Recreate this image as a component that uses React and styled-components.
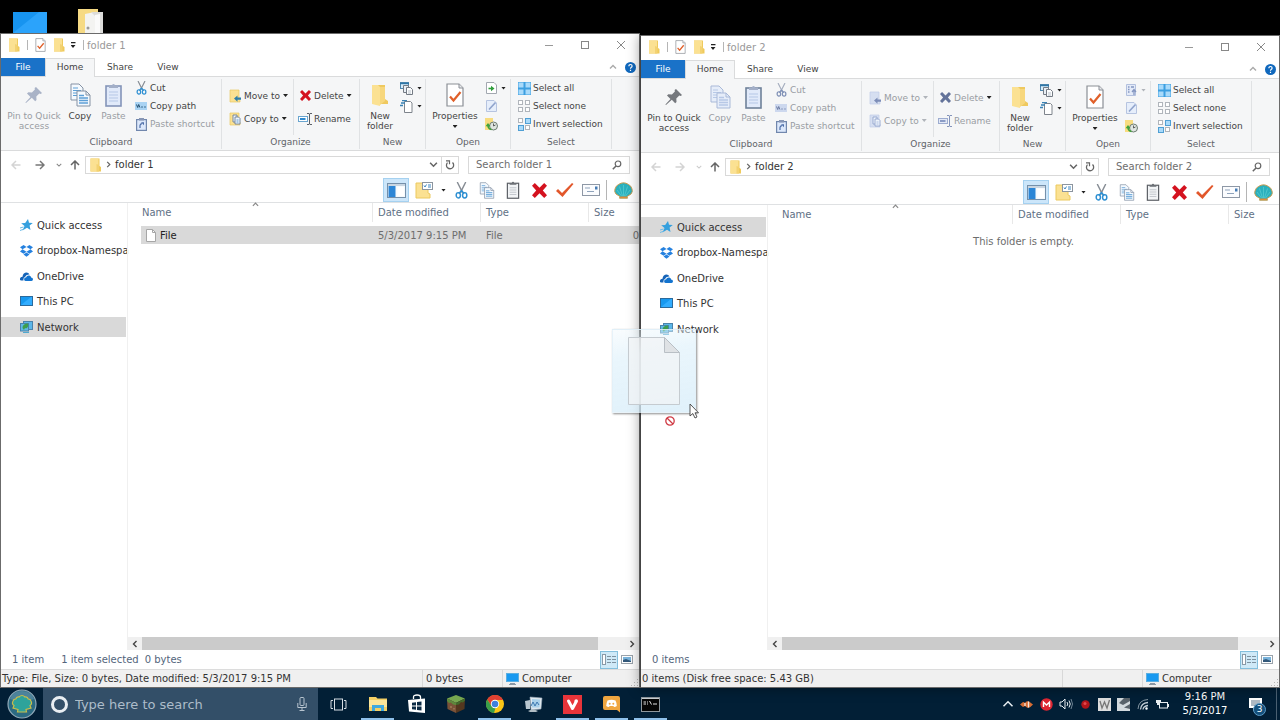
import styled, { createGlobalStyle, css } from "styled-components";

const GlobalStyle = createGlobalStyle`
  * {
    box-sizing: border-box;
  }
  body {
    margin: 0;
    background: #000;
    font-family: "DejaVu Sans", Verdana, sans-serif;
    font-size: 10px;
    color: #333;
  }
  button, input {
    font: inherit;
    color: inherit;
    border: 0;
    padding: 0;
    margin: 0;
    background: none;
    outline: none;
  }
  svg {
    display: block;
    flex: none;
  }
`;

/* ---------- icons ---------- */

function FolderIcon({ w = 12, h = 14 }) {
  return (
    <svg width={w} height={h} viewBox="0 0 12 14">
      <path d="M1 .5h9v7.500l1.500 1v4.500H1z" fill="#efca5c" />
      <path d="M1 .5h8v13H1z" fill="#fbe192" />
      <path d="M7 6l2.500 1v6.500H7z" fill="#f3d272" />
    </svg>
  );
}

function BigFolderIcon() {
  return (
    <svg width="18" height="24" viewBox="0 0 18 24">
      <path d="M1 2h13v14l3 2v3H1z" fill="#efc95f" />
      <path d="M1 2h6l2 2v19l-8-2z" fill="#fbe192" />
      <path d="M9 4h5v14l-5 4z" fill="#f7d77d" />
    </svg>
  );
}

function CheckPageIcon({ w = 11, h = 14 }) {
  return (
    <svg width={w} height={h} viewBox="0 0 18 24">
      <path d="M1 1h12l4 4v18H1z" fill="#fff" stroke="#8b8f96" strokeWidth="1.200" />
      <path d="M13 1v4h4" fill="#e7e9ec" stroke="#8b8f96" />
      <path d="M4 13.500l3.500 4 7-8.500" fill="none" stroke="#e0602a" strokeWidth="2.200" />
    </svg>
  );
}

function PinIcon({ off }) {
  return (
    <svg width="18" height="18" viewBox="0 0 18 18">
      <path
        d="M11 1l6 6-1.200 1-1.500-.4-3 3 .2 3.400-1.300 1.200-3.400-3.400L1 17l-.6-.6L5.500 11 2 7.500l1.400-1.200 3.500.2 3-3L9.600 2z"
        fill={off ? "#a9b3c7" : "#75787d"}
      />
    </svg>
  );
}

function CopyIcon({ w = 21, h = 24, off }) {
  const stroke = off ? "#a9b9d8" : "#8592a4";
  const line = off ? "#b7c8e6" : "#5c9fd6";
  const fill = off ? "#e6edf9" : "#f4f9fe";
  return (
    <svg width={w} height={h} viewBox="0 0 21 24">
      <path d="M1 1h8l4 4v12H1z" fill={fill} stroke={stroke} />
      <path d="M3 5h5M3 7.500h8M3 10h8M3 12.500h8" stroke={line} />
      <path d="M7 8h9l4 4v11H7z" fill={fill} stroke={stroke} />
      <path d="M16 8v4h4" fill="none" stroke={stroke} />
      <path d="M9 12.500h5M9 15h9M9 17.500h9M9 20h9" stroke={line} strokeWidth="1.300" />
    </svg>
  );
}

function PasteIcon({ w = 17, h = 24, dark, pale }) {
  const frame = dark ? "#5c6066" : pale ? "#8494b8" : "#6f8199";
  const line = dark ? "#b4b9c0" : "#b5c7e6";
  return (
    <svg width={w} height={h} viewBox="0 0 17 24">
      <rect x="1" y="3" width="15" height="20" fill={dark ? "#f2f4f6" : "#e1eafa"} stroke={frame} strokeWidth="1.600" />
      <path d="M4 5V2.500h3a1.500 1.500 0 013 0h3V5z" fill={dark ? "#6c7076" : "#a3afc8"} />
      <path d="M4 9h9M4 12h9M4 15h9M4 18h9" stroke={line} />
    </svg>
  );
}

function CutIcon({ w = 11, h = 14, off }) {
  const handle = off ? "#7f90b6" : "#2d8fd2";
  return (
    <svg width={w} height={h} viewBox="0 0 12 16">
      <path d="M2 0l5 10M10 0L5 10" stroke={off ? "#a5aebf" : "#858b93"} strokeWidth="1.300" />
      <ellipse cx="3" cy="12.500" rx="2" ry="2.500" fill="none" stroke={handle} strokeWidth="1.400" />
      <ellipse cx="9" cy="12.500" rx="2" ry="2.500" fill="none" stroke={handle} strokeWidth="1.400" />
      <path d="M6 8l-2.500 3M6 8l2.500 3" stroke={handle} strokeWidth="1.400" />
    </svg>
  );
}

function CopyPathIcon({ off }) {
  return (
    <svg width="12" height="8" viewBox="0 0 12 8">
      <rect width="12" height="8" fill={off ? "#cdd8ee" : "#a9d3f3"} />
      <path d="M1.500 2.500l1.200 3 1-3 1.200 3" fill="none" stroke={off ? "#6b7ba3" : "#24506f"} />
      <path d="M6 5h2M9 5h2" stroke={off ? "#8d9cc0" : "#3d6f92"} />
    </svg>
  );
}

function PasteShortcutIcon() {
  return (
    <svg width="11" height="13" viewBox="0 0 11 13">
      <rect x=".6" y="1.600" width="9.800" height="10.800" fill="#dce8fb" stroke="#7187ad" strokeWidth="1.200" />
      <rect x="3" y="0" width="5" height="2.500" fill="#8796b5" />
      <path d="M4 10V7.500q0-1.500 2-1.800" fill="none" stroke="#4d6ea8" strokeWidth="1.200" />
      <path d="M5 4.200h3v3z" fill="#4d6ea8" />
    </svg>
  );
}

function MoveToIcon({ off }) {
  return (
    <svg width="12" height="14" viewBox="0 0 12 14">
      <path d="M1 1h9v8l1 1v3H1z" fill={off ? "#d6dff1" : "#fbe192"} stroke={off ? "#c0cce6" : "#eac862"} strokeWidth=".7" />
      <path d="M5 9.500L8.500 6.500v2H12v2.200H8.500v2z" fill={off ? "#7c8db8" : "#2f7fa8"} />
    </svg>
  );
}

function CopyToIcon({ off }) {
  const s = off ? "#93a5cd" : "#6b7f97";
  return (
    <svg width="12" height="14" viewBox="0 0 12 14">
      <path d="M1 1h9v8l1 1v3H1z" fill={off ? "#d6dff1" : "#fbe192"} stroke={off ? "#c0cce6" : "#eac862"} strokeWidth=".7" />
      <path d="M4 3h4v7H4z" fill="#eef4fb" stroke={s} strokeWidth=".9" />
      <path d="M6 5h3.500L11 6.500V12H6z" fill="#eef4fb" stroke={s} strokeWidth=".9" />
      <path d="M7.500 8h2M7.500 10h2" stroke={off ? "#a4b8de" : "#4d94cf"} strokeWidth=".9" />
    </svg>
  );
}

function DeleteIcon({ size = 11, off }) {
  return (
    <svg width={size} height={size} viewBox="0 0 16 16">
      <path
        d="M3 0l5 5 5-5 3 3-4.500 5 4.500 5-3 3-5-5-5 5-3-3 4.500-5L0 3z"
        fill={off ? "#63739a" : "#d4121f"}
      />
    </svg>
  );
}

function RenameIcon({ off }) {
  return (
    <svg width="14" height="12" viewBox="0 0 14 12">
      <rect x=".5" y="3.500" width="9" height="5" fill={off ? "#e3e9f6" : "#fff"} stroke={off ? "#9dacd0" : "#6aa5cf"} />
      <rect x="2" y="5" width="5.500" height="2" fill={off ? "#8b9cc6" : "#2f8ad0"} />
      <path d="M9 .5h2l.5.5.5-.5h2M9 11.500h2l.5-.5.5.5h2M11.500 1v10" fill="none" stroke={off ? "#8494bb" : "#5a6068"} />
    </svg>
  );
}

function NewItemIcon() {
  return (
    <svg width="14" height="13" viewBox="0 0 14 13">
      <rect x=".5" y=".5" width="8" height="6" fill="#d5ecfb" stroke="#4f87ae" />
      <path d="M0 1.500h9" stroke="#2e75a5" strokeWidth="1.400" />
      <path d="M3.500 3.500h5v7h-5z" fill="#e9eff5" stroke="#747b84" />
      <path d="M6.500 5.500h4l2 2v5h-6z" fill="#fbfcfd" stroke="#747b84" />
      <path d="M8 9h3M8 11h3" stroke="#a9b4be" strokeWidth=".8" />
    </svg>
  );
}

function EasyAccessIcon() {
  return (
    <svg width="14" height="13" viewBox="0 0 14 13">
      <path d="M4.500 1.500h6l1.500 1.500v9.500H4.500z" fill="#fff" stroke="#7e848c" />
      <path d="M2 .7h5M1 3h4M0 5.500h3" stroke="#3a83b5" strokeWidth="1.300" />
    </svg>
  );
}

function OpenIcon() {
  return (
    <svg width="11" height="12" viewBox="0 0 11 12">
      <path d="M.5.500h7.500l2.500 2.500v8.500H.5z" fill="#fff" stroke="#a2a8b0" />
      <path d="M2.500 6.500h3" stroke="#2f9e3b" strokeWidth="1.600" />
      <path d="M5 3.800l3.500 2.700L5 9.200z" fill="#2f9e3b" />
    </svg>
  );
}

function OpenListIcon() {
  return (
    <svg width="11" height="12" viewBox="0 0 11 12">
      <path d="M.5.500h9v11h-9z" fill="#e3eaf8" stroke="#b2c0de" />
      <path d="M2 3h1.500M2 5.500h1.500M2 8h1.500M5 3h3" stroke="#8496c0" strokeWidth="1.300" />
      <path d="M8 11V6M6 8l2-2.500L10 8" fill="none" stroke="#8496c0" strokeWidth="1.300" />
    </svg>
  );
}

function EditIcon() {
  return (
    <svg width="11" height="12" viewBox="0 0 11 12">
      <path d="M.5.500h7.500l2.500 2.500v8.500H.5z" fill="#e6eefb" stroke="#b6c4e0" />
      <path d="M3 9.500L9.500 2.500" stroke="#8fa3cc" strokeWidth="1.600" />
    </svg>
  );
}

function HistoryIcon() {
  return (
    <svg width="13" height="13" viewBox="0 0 13 13">
      <path d="M0 0h8v8l-1 4H0z" fill="#f8dc80" />
      <circle cx="8.500" cy="8" r="4" fill="#dfe5e0" stroke="#6d7d72" />
      <path d="M8.500 5.500V8l2-1" fill="none" stroke="#555" strokeWidth=".9" />
      <path d="M3 8q.3 3 3.500 3.500" fill="none" stroke="#3fa33b" strokeWidth="1.600" />
      <path d="M.6 8.200L3 5l2.500 3.200z" fill="#3fa33b" />
    </svg>
  );
}

function SelectIcon({ kind }) {
  const cells = [[0, 0], [7, 0], [0, 7], [7, 7]];
  if (kind === "all") {
    return (
      <svg width="13" height="13" viewBox="0 0 13 13">
        <rect width="13" height="13" fill="#3c9fe0" />
        {cells.map(([x, y]) => (
          <rect key={`${x}${y}`} x={x + 0.5} y={y + 0.5} width="5" height="5" fill="#a9dafa" />
        ))}
      </svg>
    );
  }
  return (
    <svg width="13" height="13" viewBox="0 0 13 13">
      {cells.map(([x, y]) => {
        const on = kind === "invert" && x + y === 7;
        return (
          <rect
            key={`${x}${y}`}
            x={x + 0.5}
            y={y + 0.5}
            width={on ? 5 : 4}
            height={on ? 5 : 4}
            fill={on ? "#a9dafa" : "#fff"}
            stroke={on ? "#4f9fd4" : "#b0b5bb"}
          />
        );
      })}
    </svg>
  );
}

function ArrowIcon({ dir, color }) {
  const turn = { left: 0, up: 90, right: 180 }[dir];
  return (
    <svg width="10" height="10" viewBox="0 0 10 10">
      <path d="M9.500 5H1M5 1L1 5l4 4" fill="none" stroke={color} strokeWidth="1.500" transform={`rotate(${turn} 5 5)`} />
    </svg>
  );
}

function ChevronIcon({ dir = "down", color = "#666", w = 8, weight = 1.4 }) {
  const turn = { down: 0, left: 90, up: 180, right: 270 }[dir];
  return (
    <svg width={w} height={w} viewBox="0 0 8 8">
      <path d="M1 2.500l3 3 3-3" fill="none" stroke={color} strokeWidth={weight} transform={`rotate(${turn} 4 4)`} />
    </svg>
  );
}

function RefreshIcon() {
  return (
    <svg width="10" height="10" viewBox="0 0 10 10">
      <path d="M7.500 2.500A3.600 3.600 0 112.500 2.600" fill="none" stroke="#666" strokeWidth="1.300" />
      <path d="M1 .8h3.500v3.500" fill="none" stroke="#666" strokeWidth="1.200" />
    </svg>
  );
}

function SearchIcon() {
  return (
    <svg width="10" height="10" viewBox="0 0 10 10">
      <circle cx="6" cy="3.800" r="2.800" fill="none" stroke="#666" strokeWidth="1.200" />
      <path d="M4 6L.8 9.200" stroke="#666" strokeWidth="1.500" />
    </svg>
  );
}

function HelpIcon() {
  return (
    <svg width="11" height="11" viewBox="0 0 11 11">
      <circle cx="5.500" cy="5.500" r="5.500" fill="#1068bd" />
      <path d="M3.900 4.200q0-1.700 1.600-1.700t1.600 1.500q0 1-1 1.500-.6.300-.6 1.200M5.500 7.700v1.200" fill="none" stroke="#fff" strokeWidth="1.200" />
    </svg>
  );
}

function PaneIcon() {
  return (
    <svg width="19" height="15" viewBox="0 0 19 15">
      <rect x=".5" y=".5" width="18" height="14" fill="#f6fafd" stroke="#7590aa" />
      <path d="M1 2h17" stroke="#9db2c6" />
      <rect x="1.500" y="3" width="7" height="11" fill="#2c86d6" />
      <rect x="10.500" y="4" width="6.500" height="9" fill="#fff" />
    </svg>
  );
}

function ViewFolderIcon() {
  return (
    <svg width="18" height="17" viewBox="0 0 18 17">
      <path d="M1 1h12v10l2 1v4H1z" fill="#fbe192" stroke="#ecc95f" />
      <rect x="7.500" y=".5" width="10" height="7" fill="#fff" stroke="#8c959f" />
      <path d="M9 3.500l1 1.500 1.500-2.500M13 3h3M13 5h3" fill="none" stroke="#3c86c0" />
    </svg>
  );
}

function CheckIcon() {
  return (
    <svg width="18" height="14" viewBox="0 0 18 14">
      <path d="M0 8l2-2 4 4L16 0l1.500 1L6.500 14z" fill="#e2572b" />
    </svg>
  );
}

function MailIcon() {
  return (
    <svg width="18" height="12" viewBox="0 0 18 12">
      <rect x=".5" y=".5" width="17" height="11" fill="#fbfcfe" stroke="#8e98a6" />
      <rect x="13" y="2.500" width="2.500" height="3" fill="#447bb5" />
      <path d="M3 4h5M5 7.500h7" stroke="#8fa3bb" />
    </svg>
  );
}

function ShellIcon() {
  return (
    <svg width="19" height="17" viewBox="0 0 19 17">
      <path
        d="M6 14.500L2 12q-2-2.500-1-5Q2 3.500 4.500 2.500 7 .8 9.500.800T14.500 2.500Q17 3.500 18 7q1 2.500-1 5l-4 2.500.5 1.700h-8z"
        fill="#2bb0bd"
        stroke="#c99a4e"
        strokeWidth="1"
      />
      <path d="M9.500 14V3M8.500 14L5.500 4.500M10.500 14L13.500 4.500M7.500 14L3 8M11.500 14L16 8" stroke="#62d3d6" strokeWidth=".6" />
      <path d="M6.500 14.500h6l.5 1.500H6z" fill="#e08d3c" />
    </svg>
  );
}

function ShellOrb() {
  return (
    <svg width="30" height="30" viewBox="0 0 30 30">
      <circle cx="15" cy="15" r="14" fill="#2b6a82" stroke="#91a9b8" strokeWidth="1.200" />
      <path d="M3 10a13 13 0 0124 0q-12 5-24 0z" fill="#5d8fa5" opacity=".7" />
      <path
        d="M11 20.500l-5-1.500 1-2.500q-2.500-1.500-1-4.500.5-2 2.800-2 .7-2.500 3.200-2 1.500-1.500 3-1.500t3 1.500q2.500-.5 3.200 2 2.300 0 2.800 2 1.500 3-1 4.500l1 2.500-5 1.500.5 2.500h-9z"
        fill="#2ea39b"
        stroke="#c9bd4a"
        strokeWidth="1.200"
      />
    </svg>
  );
}

function StarIcon() {
  return (
    <svg width="13" height="12" viewBox="0 0 13 12">
      <path d="M8 0l1 3.800 3.800.2-3.200 2.500L10.500 11 7 8.700 2.500 11.500 4.500 7 1.200 4.300l4-.3z" fill="#35a0de" />
      <path d="M0 9l3.500-1M0 11.500L4 10" stroke="#6bbbe8" />
    </svg>
  );
}

function DropboxIcon() {
  return (
    <svg width="13" height="12" viewBox="0 0 13 12">
      <path
        d="M3.600 0L0 2.300l2.500 2L6.500 1.900zM9.400 0L6.500 1.900l4 2.400 2.500-2zM2.500 4.300L0 6.400l3.600 2.300 2.900-2zM10.500 4.300l-4 2.400 2.900 2L13 6.400zM3.500 9.500l3-2 3 2-3 2.200z"
        fill="#2581df"
      />
    </svg>
  );
}

function CloudIcon() {
  return (
    <svg width="13" height="9" viewBox="0 0 13 9">
      <path d="M0 8q-.5-3 2.500-3.200Q3 1 6 .5q2.500-.2 3.500 2Q6 2 5 5 3 5.500 3.500 8.500H1z" fill="#1664b8" />
      <path d="M5.500 9Q3.500 8.500 4.200 6.700 4.700 5.300 6 5.600q1-2.600 3.400-2 1.600.5 1.700 2Q13 5.700 13 7.300T11.500 9z" fill="#1474cf" />
    </svg>
  );
}

function MonitorIcon({ stand }) {
  return (
    <svg width="13" height={stand ? 12 : 11} viewBox={stand ? "0 0 13 12" : "0 0 13 11"}>
      <rect x=".5" y=".5" width="12" height={stand ? 8 : 9} fill="#1899f0" stroke={stand ? "#5aaee0" : "#2b6a9c"} />
      {stand ? <path d="M4 10.500h5M3 11.500h7" stroke="#8a98a5" /> : <path d="M1 9L11 1h1v8z" fill="#32adff" />}
    </svg>
  );
}

function NetworkIcon() {
  return (
    <svg width="13" height="12" viewBox="0 0 13 12">
      <rect x="3.500" y=".5" width="9" height="8" fill="#5bb7ea" stroke="#4a83ab" />
      <rect x=".5" y="2.500" width="8" height="7.500" fill="#5fb9e6" stroke="#4a83ab" />
      <path d="M2.500 7q0-4.500 5.500-4.500Q9 6 6 7.500 5 6 4 9z" fill="#3d9e4e" />
      <path d="M3 11.500h6" stroke="#4fa9cf" />
    </svg>
  );
}

function FileIcon() {
  return (
    <svg width="10" height="13" viewBox="0 0 10 13">
      <path d="M.5.500h6l3 3v9h-9z" fill="#fff" stroke="#a6a6a6" />
      <path d="M6.500.500v3h3" fill="none" stroke="#a6a6a6" />
    </svg>
  );
}

function DetailsViewIcon() {
  return (
    <svg width="14" height="11" viewBox="0 0 14 11">
      <rect x=".5" y=".5" width="3" height="10" fill="#fff" stroke="#8a9aa8" />
      <path d="M5 2.500h4M10 2.500h4M5 5.500h4M10 5.500h4M5 8.500h4M10 8.500h4" stroke="#7e919f" />
    </svg>
  );
}

function ThumbViewIcon() {
  return (
    <svg width="12" height="10" viewBox="0 0 12 10">
      <rect x=".5" y=".5" width="11" height="8" fill="#fff" stroke="#9aa3ab" />
      <rect x="2" y="2" width="8" height="5" fill="#79b4dc" />
      <path d="M2 5l3-1 5 2v1H2z" fill="#33587a" />
    </svg>
  );
}

function GripIcon() {
  return (
    <svg width="8" height="8" viewBox="0 0 8 8" fill="#b5b5b5">
      <path d="M6 0h1v1H6zM6 3h1v1H6zM3 3h1v1H3zM6 6h1v1H6zM3 6h1v1H3zM0 6h1v1H0z" />
    </svg>
  );
}

/* ---------- ribbon ---------- */

function SmallCommand({ icon, label, off, arrow, arrowOff, tall }) {
  return (
    <SmallButton $off={off} $tall={tall} disabled={off} aria-label={label ? undefined : "More"}>
      <IconSlot>{icon}</IconSlot>
      {label}
      {arrow && <Caret $off={arrowOff} />}
    </SmallButton>
  );
}

function Ribbon({ idle }) {
  return (
    <RibbonBar>
      <Group $width={221}>
        <GroupBody>
          <BigButton $width={66} $off={!idle} disabled={!idle}>
            <BigIcon><PinIcon off={!idle} /></BigIcon>
            Pin to Quick access
          </BigButton>
          <BigButton $width={26} $off={idle} disabled={idle}>
            <BigIcon><CopyIcon off={idle} /></BigIcon>
            Copy
          </BigButton>
          <BigButton $width={41} $off disabled>
            <BigIcon><PasteIcon pale={!idle} /></BigIcon>
            Paste
          </BigButton>
          <Stack>
            <SmallCommand icon={<CutIcon off={idle} />} label="Cut" off={idle} />
            <SmallCommand icon={<CopyPathIcon off={idle} />} label="Copy path" off={idle} />
            <SmallCommand icon={<PasteShortcutIcon />} label="Paste shortcut" off />
          </Stack>
        </GroupBody>
        <GroupLabel>Clipboard</GroupLabel>
      </Group>
      <Group $width={138}>
        <GroupBody>
          <Stack $width={72} $pad={6} $center $line>
            <SmallCommand tall icon={<MoveToIcon off={idle} />} label="Move to" off={idle} arrow arrowOff={idle} />
            <SmallCommand tall icon={<CopyToIcon off={idle} />} label="Copy to" off={idle} arrow arrowOff={idle} />
          </Stack>
          <Stack $pad={4} $center>
            <SmallCommand tall icon={<DeleteIcon off={idle} />} label="Delete" off={idle} arrow />
            <SmallCommand tall icon={<RenameIcon off={idle} />} label="Rename" off={idle} />
          </Stack>
        </GroupBody>
        <GroupLabel>Organize</GroupLabel>
      </Group>
      <Group $width={66}>
        <GroupBody>
          <BigButton $width={40}>
            <BigIcon><BigFolderIcon /></BigIcon>
            New folder
          </BigButton>
          <Stack>
            <SmallCommand icon={<NewItemIcon />} arrow />
            <SmallCommand icon={<EasyAccessIcon />} arrow />
          </Stack>
        </GroupBody>
        <GroupLabel>New</GroupLabel>
      </Group>
      <Group $width={85}>
        <GroupBody>
          <BigButton $width={58}>
            <BigIcon><CheckPageIcon w={18} h={24} /></BigIcon>
            Properties
            <Caret />
          </BigButton>
          <Stack>
            <SmallCommand icon={idle ? <OpenListIcon /> : <OpenIcon />} arrow arrowOff={idle} />
            <SmallCommand icon={<EditIcon />} off />
            <SmallCommand icon={<HistoryIcon />} />
          </Stack>
        </GroupBody>
        <GroupLabel>Open</GroupLabel>
      </Group>
      <Group $width={101}>
        <GroupBody>
          <Stack $pad={6}>
            <SmallCommand icon={<SelectIcon kind="all" />} label="Select all" />
            <SmallCommand icon={<SelectIcon kind="none" />} label="Select none" />
            <SmallCommand icon={<SelectIcon kind="invert" />} label="Invert selection" />
          </Stack>
        </GroupBody>
        <GroupLabel>Select</GroupLabel>
      </Group>
    </RibbonBar>
  );
}

/* ---------- explorer window ---------- */

const places = [
  { name: "Quick access", icon: <StarIcon /> },
  { name: "dropbox-Namespa", icon: <DropboxIcon /> },
  { name: "OneDrive", icon: <CloudIcon /> },
  { name: "This PC", icon: <MonitorIcon /> },
  { name: "Network", icon: <NetworkIcon /> },
];

function Explorer({ title, place, files, counts, status, size, front }) {
  const idle = files.length === 0;
  return (
    <Window $front={front} aria-label={title}>
      <TitleBar>
        <FolderIcon />
        <Divider />
        <CheckPageIcon />
        <FolderIcon />
        <QuickMenu aria-label="Customize toolbar">
          <Caret $bar />
        </QuickMenu>
        <Divider />
        <h1>{title}</h1>
        <Caption>
          <button aria-label="Minimize">
            <svg width="10" height="10"><path d="M1 5.500h8" stroke="#999" /></svg>
          </button>
          <button aria-label="Maximize">
            <svg width="10" height="10"><rect x="1.500" y="1.500" width="7" height="7" fill="none" stroke="#888" /></svg>
          </button>
          <button aria-label="Close">
            <svg width="10" height="10"><path d="M1 1l8 8M9 1L1 9" stroke="#888" /></svg>
          </button>
        </Caption>
      </TitleBar>
      <Tabs>
        <Tab $kind="file">File</Tab>
        <Tab $kind="active">Home</Tab>
        <Tab>Share</Tab>
        <Tab>View</Tab>
        <TabTools>
          <ChevronIcon dir="up" color="#aaa" />
          <HelpIcon />
        </TabTools>
      </Tabs>
      <Ribbon idle={idle} />
      <AddressRow>
        <NavButtons>
          <button aria-label="Back"><ArrowIcon dir="left" color="#d4d4d4" /></button>
          <button aria-label="Forward"><ArrowIcon dir="right" color={idle ? "#d4d4d4" : "#777"} /></button>
          <button aria-label="Recent"><ChevronIcon w={6} color={idle ? "#ccc" : "#888"} /></button>
          <button aria-label="Up"><ArrowIcon dir="up" color="#666" /></button>
        </NavButtons>
        <AddressBox>
          <FolderIcon w={13} />
          <ChevronIcon dir="right" w={7} />
          <Crumb>{title}</Crumb>
          <ChevronIcon w={9} />
          <Refresh aria-label="Refresh"><RefreshIcon /></Refresh>
        </AddressBox>
        <SearchBox>
          <input type="text" placeholder={`Search ${title}`} aria-label={`Search ${title}`} />
          <SearchIcon />
        </SearchBox>
      </AddressRow>
      <Toolbar>
        <PaneToggle aria-label="Navigation pane"><PaneIcon /></PaneToggle>
        <Tool $width={30} aria-label="View"><ViewFolderIcon /></Tool>
        <Tool $width={9} aria-label="View options"><Caret /></Tool>
        <Tool aria-label="Cut"><CutIcon w={13} h={17} /></Tool>
        <Tool aria-label="Copy"><CopyIcon w={16} h={17} /></Tool>
        <Tool aria-label="Paste"><PasteIcon w={14} h={18} dark /></Tool>
        <Tool aria-label="Delete"><DeleteIcon size={15} /></Tool>
        <Tool aria-label="Properties"><CheckIcon /></Tool>
        <Tool aria-label="E-mail"><MailIcon /></Tool>
        <ToolLine />
        <Tool $width={32} aria-label="Classic shell"><ShellIcon /></Tool>
      </Toolbar>
      <Body>
        <Sidebar>
          {places.map((item) => (
            <Place key={item.name} href="#" $active={item.name === place}>
              {item.icon}
              <span>{item.name}</span>
            </Place>
          ))}
        </Sidebar>
        <Main>
          <FileTable>
            <colgroup>
              <col />
              <col width="108" />
              <col width="108" />
              <col width="50" />
            </colgroup>
            <thead>
              <tr>
                <th>
                  <ColumnHead $first>
                    Name
                    <SortMark><ChevronIcon dir="up" w={7} color="#888" /></SortMark>
                  </ColumnHead>
                </th>
                <th><ColumnHead>Date modified</ColumnHead></th>
                <th><ColumnHead>Type</ColumnHead></th>
                <th><ColumnHead $last>Size</ColumnHead></th>
              </tr>
            </thead>
            <tbody>
              {files.map((file) => (
                <FileRow key={file.name}>
                  <td><FileName><FileIcon />{file.name}</FileName></td>
                  <td>{file.modified}</td>
                  <td>{file.type}</td>
                  <SizeCell>{file.size}</SizeCell>
                </FileRow>
              ))}
            </tbody>
          </FileTable>
          {idle && <Empty>This folder is empty.</Empty>}
          <ScrollBar>
            <ScrollButton aria-label="Scroll left"><ChevronIcon dir="left" color="#444" /></ScrollButton>
            <Thumb />
            <ScrollButton aria-label="Scroll right"><ChevronIcon dir="right" color="#444" /></ScrollButton>
          </ScrollBar>
        </Main>
      </Body>
      <DetailsBar>
        {counts.map((text) => <span key={text}>{text}</span>)}
        <ViewSwitch>
          <ViewButton $active aria-label="Details view"><DetailsViewIcon /></ViewButton>
          <ViewButton aria-label="Thumbnail view"><ThumbViewIcon /></ViewButton>
        </ViewSwitch>
      </DetailsBar>
      <StatusBar>
        <StatusText>{status}</StatusText>
        <StatusCell $width={80}>{size}</StatusCell>
        <StatusCell $width={137}>
          <MonitorIcon stand />
          Computer
          <Grip><GripIcon /></Grip>
        </StatusCell>
      </StatusBar>
    </Window>
  );
}

/* ---------- taskbar ---------- */

const apps = [
  {
    name: "Task View",
    icon: (
      <svg width="17" height="13" viewBox="0 0 17 13" fill="none" stroke="#d5dde4">
        <rect x="4.500" y="1" width="8" height="11" />
        <path d="M3 2.500H1v8h2M14 2.500h2v8h-2" />
      </svg>
    ),
  },
  {
    name: "File Explorer",
    open: true,
    icon: (
      <svg width="18" height="16" viewBox="0 0 18 16">
        <path d="M0 1h7l1.500 1.500H18V15H0z" fill="#f3cf66" />
        <path d="M0 4h18v7H0z" fill="#fbe59a" />
        <path d="M3 9h12v6h-3v-3H6v3H3z" fill="#3fa9e0" />
      </svg>
    ),
  },
  {
    name: "Store",
    icon: (
      <svg width="18" height="20" viewBox="0 0 18 20">
        <path d="M5.500 5V3q0-2 3.500-2t3.500 2v2" fill="none" stroke="#fff" strokeWidth="1.300" />
        <path d="M0 6l17-1.500V19L1 17.500z" fill="#fff" />
        <path d="M4 8.700l4-.5v3.300H4zM9 8l4.500-.5v4H9zM4 12.500h4v3.300L4 15.300zM9 12.500h4.500v4L9 16z" fill="#0b2a45" />
      </svg>
    ),
  },
  {
    name: "Minecraft",
    icon: (
      <svg width="18" height="18" viewBox="0 0 18 18">
        <path d="M9 0l9 3.500L9 8 0 3.500z" fill="#76a850" />
        <path d="M0 3.500L9 8v10l-8.500-4z" fill="#7a5238" />
        <path d="M18 3.500L9 8v10l8.500-4z" fill="#54371f" />
        <path d="M0 3.500L9 8v2L6 9.500 4 7.500 2 8 0 6z" fill="#5d8a3c" />
        <path d="M18 3.500L9 8v2l3-.5 2-2.500 2 .5 2-2z" fill="#436a2b" />
        <path d="M3 11h2v2H3zM6 13h2v1.500H6z" fill="#96704f" />
      </svg>
    ),
  },
  {
    name: "Chrome",
    open: true,
    icon: (
      <svg width="18" height="18" viewBox="0 0 18 18">
        <circle cx="9" cy="9" r="9" fill="#fbc516" />
        <path d="M1.200 4.500A9 9 0 0116.800 4.500L17 5H9a4 4 0 00-3.500 6z" fill="#df4032" />
        <path d="M1.200 4.500L5.500 11A4 4 0 009.500 13L8 18A9 9 0 011.200 4.500z" fill="#3a9f4b" />
        <circle cx="9" cy="9" r="4.200" fill="#fff" />
        <circle cx="9" cy="9" r="3.300" fill="#3f80dc" />
      </svg>
    ),
  },
  {
    name: "Task Manager",
    icon: (
      <svg width="19" height="17" viewBox="0 0 19 17">
        <path d="M6 1l12 1-1 11-10 1z" fill="#dfe8ee" stroke="#9ab" strokeWidth=".6" />
        <path d="M8 3l8 .5-.5 8H8z" fill="#a9d0ea" />
        <path d="M1 5l5-1v9H2z" fill="#b8c6d0" />
        <path d="M7 10l2-4 2 4 2-4 2 3" fill="none" stroke="#3d78b0" />
        <path d="M4 15l5-2 5 2-2 1H6z" fill="#b0bcc4" />
      </svg>
    ),
  },
  {
    name: "Vivaldi",
    open: true,
    icon: (
      <svg width="19" height="19" viewBox="0 0 19 19">
        <rect width="19" height="19" fill="#e8343a" />
        <path d="M5.500 6l4 7.500L13 7" fill="none" stroke="#fff" strokeWidth="3" strokeLinecap="round" strokeLinejoin="round" />
        <circle cx="13.200" cy="6" r="1.800" fill="#fff" />
      </svg>
    ),
  },
  {
    name: "Discord",
    open: true,
    icon: (
      <svg width="17" height="18" viewBox="0 0 17 18">
        <path d="M2 1h13q2 0 2 2v14.500L14 15H2q-2 0-2-2V3q0-2 2-2z" fill="#f0a640" />
        <path d="M4.500 5.500q4-1.500 8 0 1.500 3 1.300 5.500-1.300 1-2.800 1l-.6-1H6.600L6 12q-1.500 0-2.800-1 0-2.500 1.300-5.500z" fill="#fff" />
        <circle cx="6.700" cy="8.700" r="1" fill="#f0a640" />
        <circle cx="10.300" cy="8.700" r="1" fill="#f0a640" />
      </svg>
    ),
  },
  {
    name: "Command Prompt",
    open: true,
    icon: (
      <svg width="19" height="15" viewBox="0 0 19 15">
        <rect x=".5" y=".5" width="18" height="14" fill="#050505" stroke="#8f979d" />
        <path d="M1 1.500h17" stroke="#c9ced2" />
        <path d="M2.500 5h2.500M2.500 7h2.500M6.500 4.500v1M6.500 6.500v1M8.500 4l2 3.500M12 7h4" stroke="#e3e3e3" />
      </svg>
    ),
  },
];

const tray = [
  { name: "Show hidden icons", icon: <ChevronIcon dir="up" w={12} weight={1} color="#e8eef2" /> },
  {
    name: "Fish",
    icon: (
      <svg width="13" height="9" viewBox="0 0 13 9">
        <path d="M0 4.500L3 2q1 0 2 1Q6 .5 9 1.500l4 3Q11 7 8 8 6.500 7.500 5 6L3 7z" fill="#d76c33" />
        <path d="M5 3v3M8.500 1.500V7.500" stroke="#f4e6dc" strokeWidth="1.300" />
      </svg>
    ),
  },
  {
    name: "Mega",
    icon: (
      <svg width="13" height="13" viewBox="0 0 13 13">
        <circle cx="6.500" cy="6.500" r="6.200" fill="#dd2632" />
        <path d="M3.500 9V4.200L6.500 7l3-2.800V9" fill="none" stroke="#fff" strokeWidth="1.400" />
      </svg>
    ),
  },
  {
    name: "Volume",
    icon: (
      <svg width="14" height="12" viewBox="0 0 14 12" fill="none" stroke="#e8eef2">
        <path d="M1 4h2l3-3v10L3 8H1z" />
        <path d="M8 4q1.500 2 0 4M10 2.500q2.500 3.500 0 7" />
        <path d="M12 1q3 5 0 10" stroke="#6f8494" />
      </svg>
    ),
  },
  {
    name: "Recorder",
    icon: (
      <svg width="9" height="9" viewBox="0 0 9 9">
        <circle cx="4.500" cy="4.500" r="4.200" fill="#b0151b" />
        <circle cx="4" cy="3.500" r="1.500" fill="#e0484c" />
      </svg>
    ),
  },
  {
    name: "Wacom",
    icon: (
      <svg width="13" height="13" viewBox="0 0 13 13">
        <rect width="13" height="13" fill="#dedede" />
        <path d="M2 3l2 7 2.500-6L9 10l2.500-8" fill="none" stroke="#777" strokeWidth="1.300" />
      </svg>
    ),
  },
  {
    name: "Sync",
    icon: (
      <svg width="13" height="13" viewBox="0 0 13 13">
        <rect width="13" height="13" fill="#59636b" />
        <path d="M0 0h7L2 5l4 2 7-4v3L7 9.500 13 11v2H0z" fill="#d3dade" />
      </svg>
    ),
  },
  {
    name: "Wi-Fi",
    icon: (
      <svg width="12" height="12" viewBox="0 0 12 12" fill="none" stroke="#c3ced6">
        <path d="M1 11Q1.500 2 11 1.500" stroke="#8496a3" />
        <path d="M3.500 11.500Q4 5 11 4.500M6 11.500Q6.500 8 11 7.500" strokeWidth="1.300" />
        <circle cx="9.500" cy="10.500" r="1" fill="#fff" />
      </svg>
    ),
  },
  {
    name: "Battery",
    icon: (
      <svg width="13" height="11" viewBox="0 0 13 11">
        <rect x="3.500" y="3.500" width="8" height="5.500" fill="none" stroke="#e8eef2" />
        <path d="M12.500 5v3" stroke="#e8eef2" />
        <path d="M0 1h5v3H4v2H1V4H0z" fill="#e8eef2" />
      </svg>
    ),
  },
];

function Taskbar() {
  return (
    <TaskbarBar>
      <Start aria-label="Start"><ShellOrb /></Start>
      <TaskSearch>
        <Ring />
        <input type="text" placeholder="Type here to search" aria-label="Type here to search" />
        <svg width="10" height="14" viewBox="0 0 10 14" fill="none" stroke="#b7c4cf">
          <rect x="3" y=".5" width="4" height="8" rx="1" />
          <path d="M.8 6v4.500h8.400V6M5 10.500V13M2.500 13.500h5" />
        </svg>
      </TaskSearch>
      {apps.map((app) => (
        <AppButton key={app.name} $open={app.open} aria-label={app.name}>{app.icon}</AppButton>
      ))}
      <Tray>
        {tray.map((item) => (
          <button key={item.name} aria-label={item.name}>{item.icon}</button>
        ))}
      </Tray>
      <Clock>
        <span>9:16 PM</span>
        <span>5/3/2017</span>
      </Clock>
      <Notifications aria-label="Notifications">
        <svg width="14" height="13" viewBox="0 0 14 13">
          <path d="M0 0h13v10H7l-3 3v-3H0z" fill="#fff" />
          <path d="M2 3h9M2 5h9M2 7h6" stroke="#35506a" strokeWidth=".8" />
        </svg>
        <Badge>3</Badge>
      </Notifications>
    </TaskbarBar>
  );
}

function App() {
  return (
    <Desktop>
      <GlobalStyle />
      <Shortcuts>
        <svg width="34" height="21" viewBox="0 0 34 21">
          <rect width="34" height="22" fill="#1794f0" />
          <path d="M0 21L26 0h8v21z" fill="#2ba3fb" />
        </svg>
        <svg width="26" height="24" viewBox="0 0 26 24">
          <path d="M0 0h20v24H0z" fill="#f6da84" />
          <path d="M7 5l10-2v21H7z" fill="#f3f3f1" />
          <path d="M13 3h12v21h-8V7z" fill="#dcdcda" />
          <path d="M17 6l5-1v19h-5z" fill="#fafafa" />
          <circle cx="10" cy="19" r="1.500" fill="#9a9a9a" />
        </svg>
      </Shortcuts>
      <Windows>
        <Explorer
          title="folder 1"
          place="Network"
          files={[{ name: "File", modified: "5/3/2017 9:15 PM", type: "File", size: "0" }]}
          counts={["1 item", "1 item selected", "0 bytes"]}
          status="Type: File, Size: 0 bytes, Date modified: 5/3/2017 9:15 PM"
          size="0 bytes"
        />
        <Explorer
          front
          title="folder 2"
          place="Quick access"
          files={[]}
          counts={["0 items"]}
          status="0 items (Disk free space: 5.43 GB)"
        />
        <DragGhost>
          <svg width="52" height="68" viewBox="0 0 52 68">
            <path d="M.5.500h36l15 15v52H.5z" fill="#f2f3f5" fillOpacity=".7" stroke="#c5cbd0" />
            <path d="M36.500.500v15h15z" fill="#dfe2e5" stroke="#b9bfc5" />
          </svg>
        </DragGhost>
        <Pointer>
          <svg width="10" height="16" viewBox="0 0 10 16">
            <path d="M1 1v12l2.800-2.500L6 15l2-1-2-4.200h3.500z" fill="#fff" stroke="#444" strokeWidth=".9" />
          </svg>
        </Pointer>
        <NoDrop>
          <svg width="10" height="10" viewBox="0 0 10 10" fill="none" stroke="#cf3a44" strokeWidth="1.300">
            <circle cx="5" cy="5" r="4.200" />
            <path d="M2 2l6 6" />
          </svg>
        </NoDrop>
      </Windows>
      <Taskbar />
    </Desktop>
  );
}

export default App;

const Desktop = styled.div`
  display: flex;
  flex-direction: column;
  min-height: 100vh;
  background: #000;
`;

const Shortcuts = styled.div`
  display: flex;
  align-items: flex-end;
  gap: 31px;
  height: 33px;
  padding-left: 13px;
`;

const Windows = styled.main`
  position: relative;
  flex: 1;
  display: grid;
  grid-template-columns: 1fr 1fr;
`;

const Window = styled.section`
  display: flex;
  flex-direction: column;
  min-width: 0;
  background: #fff;
  border: 1px solid #6b6b6b;
  ${({ $front }) =>
    $front &&
    css`
      margin-top: 2px;
      border-left-color: #444;
      box-shadow: 0 0 12px rgba(0, 0, 0, 0.4);
      z-index: 1;
    `}
`;

const TitleBar = styled.header`
  display: flex;
  align-items: center;
  gap: 7px;
  height: 24px;
  padding: 0 0 2px 7px;
  h1 {
    flex: 1;
    margin: 0 0 0 -4px;
    font-size: 10px;
    font-weight: normal;
    color: #999;
  }
`;

const Divider = styled.span`
  width: 1px;
  height: 10px;
  background: #b5b5b5;
`;

const QuickMenu = styled.button`
  width: 8px;
  margin: 0 -1px 0 -3px;
`;

const Caption = styled.div`
  display: flex;
  button {
    display: flex;
    justify-content: center;
    width: 36px;
  }
`;

const Caret = styled.span`
  display: block;
  flex: none;
  width: 5px;
  height: 3px;
  margin: 0 auto;
  background: ${({ $off }) => ($off ? "#b0b4ba" : "#222")};
  clip-path: polygon(0 0, 100% 0, 50% 100%);
  ${({ $bar }) =>
    $bar &&
    css`
      height: 6px;
      clip-path: polygon(0 0, 100% 0, 100% 20%, 0 20%, 0 50%, 100% 50%, 50% 100%, 0 50%);
    `}
`;

const Tabs = styled.nav`
  display: flex;
  height: 19px;
  border-bottom: 1px solid #dadbdc;
`;

const tabKinds = {
  file: css`
    width: 44px;
    background: #1a72c8;
    color: #fff;
  `,
  active: css`
    width: 50px;
    margin-bottom: -1px;
    padding-bottom: 2px;
    background: #f5f6f7;
    border: 1px solid #dadbdc;
    border-bottom: 0;
  `,
};

const Tab = styled.button`
  width: 48px;
  font-size: 9px;
  color: #444;
  &:nth-child(3) {
    margin-left: 1px;
  }
  ${({ $kind }) => tabKinds[$kind]}
`;

const TabTools = styled.div`
  display: flex;
  align-items: center;
  gap: 8px;
  margin-left: auto;
  padding-right: 3px;
`;

const RibbonBar = styled.div`
  display: flex;
  height: 74px;
  padding: 2px 0 1px;
  background: #f5f6f7;
  border-bottom: 1px solid #dadbdc;
`;

const Group = styled.div`
  display: flex;
  flex-direction: column;
  flex: none;
  width: ${({ $width }) => $width}px;
  border-right: 1px solid #e0e2e4;
`;

const GroupBody = styled.div`
  display: flex;
  height: 57px;
`;

const GroupLabel = styled.div`
  font-size: 9px;
  line-height: 14px;
  text-align: center;
  color: #5f6368;
`;

const BigButton = styled.button`
  display: flex;
  flex-direction: column;
  align-items: center;
  flex: none;
  width: ${({ $width }) => $width}px;
  font-size: 9px;
  line-height: 10px;
  color: ${({ $off }) => ($off ? "#999da3" : "#444")};
  ${Caret} {
    margin-top: 4px;
  }
`;

const BigIcon = styled.span`
  display: flex;
  align-items: center;
  justify-content: center;
  height: 24px;
  margin: 4px 0;
`;

const Stack = styled.div`
  display: flex;
  flex-direction: column;
  justify-content: ${({ $center }) => ($center ? "center" : "flex-start")};
  width: ${({ $width }) => ($width ? `${$width}px` : "auto")};
  padding-left: ${({ $pad }) => $pad || 0}px;
  border-right: ${({ $line }) => ($line ? "1px solid #e0e2e4" : "0")};
`;

const SmallButton = styled.button`
  display: flex;
  align-items: center;
  gap: 2px;
  height: ${({ $tall }) => ($tall ? 23 : 18)}px;
  font-size: 9px;
  white-space: nowrap;
  color: ${({ $off }) => ($off ? "#999da3" : "#444")};
  ${Caret} {
    margin-left: 1px;
  }
`;

const IconSlot = styled.span`
  display: flex;
  justify-content: center;
  width: 14px;
`;

const AddressRow = styled.div`
  display: flex;
  align-items: center;
  height: 27px;
  padding-right: 9px;
`;

const NavButtons = styled.div`
  display: grid;
  grid-template-columns: 30px 18px 20px 12px;
  width: 84px;
  button {
    display: flex;
    align-items: center;
    justify-content: center;
  }
`;

const AddressBox = styled.div`
  flex: 1;
  display: flex;
  align-items: center;
  gap: 3px;
  height: 18px;
  padding-left: 3px;
  border: 1px solid #d9d9d9;
`;

const Crumb = styled.button`
  flex: 1;
  text-align: left;
`;

const Refresh = styled.button`
  display: flex;
  align-items: center;
  justify-content: center;
  width: 17px;
  height: 16px;
  border-left: 1px solid #d9d9d9;
`;

const SearchBox = styled.div`
  display: flex;
  align-items: center;
  width: 162px;
  height: 18px;
  margin-left: 9px;
  padding: 0 7px;
  border: 1px solid #d9d9d9;
  input {
    flex: 1;
    min-width: 0;
  }
  input::placeholder {
    color: #6d6d6d;
    opacity: 1;
  }
`;

const Toolbar = styled.div`
  display: flex;
  align-items: center;
  justify-content: flex-end;
  height: 25px;
  border-bottom: 1px solid #dfe1e3;
`;

const Tool = styled.button`
  display: flex;
  align-items: center;
  justify-content: center;
  width: ${({ $width }) => $width || 26}px;
  height: 24px;
`;

const PaneToggle = styled(Tool)`
  background: #cce6fa;
  border: 1px solid #a5d1f0;
`;

const ToolLine = styled.span`
  width: 1px;
  height: 20px;
  margin-left: 2px;
  background: #b5b5b5;
`;

const Body = styled.div`
  flex: 1;
  display: flex;
  min-height: 0;
`;

const Sidebar = styled.nav`
  display: flex;
  flex-direction: column;
  justify-content: space-between;
  width: 125px;
  height: 122px;
  margin-top: 12px;
`;

const Place = styled.a`
  display: flex;
  align-items: center;
  gap: 4px;
  height: 20px;
  padding-left: 19px;
  color: #333;
  text-decoration: none;
  white-space: nowrap;
  background: ${({ $active }) => ($active ? "#d9d9d9" : "transparent")};
`;

const Main = styled.div`
  flex: 1;
  display: flex;
  flex-direction: column;
  min-width: 0;
  border-left: 1px solid #f0f0f0;
  margin-left: 1px;
`;

const FileTable = styled.table`
  table-layout: fixed;
  width: calc(100% - 13px);
  margin-left: 13px;
  border-spacing: 0;
  th, td {
    padding: 0;
    font-weight: normal;
    text-align: left;
  }
  th {
    padding-bottom: 4px;
  }
`;

const ColumnHead = styled.button`
  position: relative;
  display: block;
  width: 100%;
  height: 19px;
  padding-left: ${({ $first }) => ($first ? 1 : 5)}px;
  text-align: left;
  color: #5f7186;
  border-right: ${({ $last }) => ($last ? "0" : "1px solid #e8e8e8")};
`;

const SortMark = styled.span`
  position: absolute;
  top: -2px;
  left: calc(50% - 5px);
`;

const FileRow = styled.tr`
  height: 18px;
  background: #d9d9d9;
  color: #6d6d6d;
  td {
    padding-left: 5px;
  }
`;

const FileName = styled.span`
  display: flex;
  align-items: center;
  gap: 4px;
  color: #222;
`;

const SizeCell = styled.td`
  && {
    text-align: right;
  }
`;

const Empty = styled.p`
  margin: 8px 0 0;
  text-align: center;
  color: #6d6d6d;
`;

const ScrollBar = styled.div`
  display: flex;
  height: 13px;
  margin-top: auto;
  background: #f0f0f0;
`;

const ScrollButton = styled.button`
  display: flex;
  align-items: center;
  justify-content: center;
  width: 14px;
`;

const Thumb = styled.div`
  flex: 1;
  margin-right: 27px;
  background: #cbcbcb;
`;

const DetailsBar = styled.div`
  display: flex;
  align-items: center;
  height: 19px;
  padding: 0 4px 0 11px;
  color: #53657c;
  span + span {
    margin-left: 17px;
  }
  span + span + span {
    margin-left: 6px;
  }
`;

const ViewSwitch = styled.div`
  display: flex;
  margin-left: auto;
`;

const ViewButton = styled.button`
  display: flex;
  align-items: center;
  justify-content: center;
  width: 17px;
  height: 18px;
  ${({ $active }) =>
    $active &&
    css`
      width: 18px;
      background: #cfe9f7;
      border: 1px solid #84bfdd;
    `}
`;

const StatusBar = styled.footer`
  display: flex;
  height: 18px;
  line-height: 17px;
  background: #f0f0f0;
  border-top: 1px solid #dcdcdc;
`;

const StatusText = styled.div`
  flex: 1;
  padding-left: 1px;
`;

const StatusCell = styled.div`
  display: flex;
  align-items: center;
  gap: 3px;
  width: ${({ $width }) => $width}px;
  padding-left: 3px;
  border-left: 1px solid #d8d8d8;
`;

const Grip = styled.span`
  align-self: flex-end;
  margin-left: auto;
`;

const DragGhost = styled.div`
  position: absolute;
  z-index: 2;
  top: 296px;
  left: calc(50% - 28px);
  display: flex;
  align-items: center;
  justify-content: center;
  width: 84px;
  height: 84px;
  background: linear-gradient(170deg, rgba(235, 246, 252, 0.3), rgba(225, 242, 251, 0.7) 30%, rgba(213, 236, 249, 0.75));
  border: 1px solid rgba(225, 238, 246, 0.6);
  box-shadow: 1px 1px 2px rgba(0, 0, 0, 0.45);
`;

const Pointer = styled.div`
  position: absolute;
  z-index: 3;
  top: 370px;
  left: calc(50% + 49px);
`;

const NoDrop = styled.div`
  position: absolute;
  z-index: 3;
  top: 383px;
  left: calc(50% + 25px);
`;

const TaskbarBar = styled.footer`
  display: flex;
  height: 32px;
  background: #021f36;
  color: #fff;
`;

const Start = styled.button`
  display: flex;
  align-items: center;
  justify-content: center;
  width: 43px;
`;

const TaskSearch = styled.div`
  display: flex;
  align-items: center;
  width: 275px;
  margin-right: 4px;
  padding: 0 11px 0 8px;
  background: #334f68;
  input {
    flex: 1;
    min-width: 0;
    font-size: 13px;
  }
  input::placeholder {
    color: #adbdca;
    opacity: 1;
  }
`;

const Ring = styled.span`
  width: 17px;
  height: 17px;
  margin-right: 7px;
  border: 3px solid #e9eef2;
  border-radius: 50%;
`;

const AppButton = styled.button`
  display: flex;
  align-items: center;
  justify-content: center;
  width: 33px;
  margin-right: 6px;
  border-bottom: 2px solid ${({ $open }) => ($open ? "#8fc0ea" : "transparent")};
  border-top: 2px solid transparent;
`;

const Tray = styled.div`
  display: flex;
  justify-content: space-between;
  width: 174px;
  margin-left: auto;
  button {
    display: flex;
    align-items: center;
    justify-content: center;
    width: 19px;
  }
`;

const Clock = styled.div`
  display: flex;
  flex-direction: column;
  justify-content: center;
  width: 62px;
  margin-left: 2px;
  line-height: 14px;
  text-align: center;
`;

const Notifications = styled.button`
  position: relative;
  display: flex;
  align-items: center;
  padding-left: 13px;
  width: 41px;
  margin-right: 3px;
  border-right: 1px solid #4a6072;
`;

const Badge = styled.span`
  position: absolute;
  right: 10px;
  bottom: 4px;
  width: 13px;
  height: 13px;
  border: 1px solid #5c9ac6;
  border-radius: 50%;
  background: #14507c;
  font-size: 9px;
  line-height: 11px;
`;
